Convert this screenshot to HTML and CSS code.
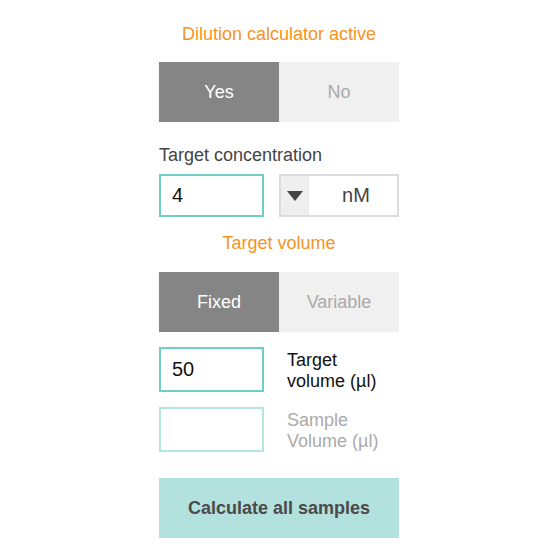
FILE: index.html
```html
<!DOCTYPE html>
<html lang="en">

<head>
    <meta charset="UTF-8">
    <meta name="viewport" content="width=device-width, initial-scale=1.0">
    <title>Dilution calculator</title>
    <link rel="stylesheet" href="styles.css">
</head>

<body>
    <div class="panel">
        <div class="heading heading--first">Dilution calculator active</div>
        <div class="toggle toggle--first">
            <div class="toggle__item toggle__item--on">Yes</div>
            <div class="toggle__item">No</div>
        </div>

        <div class="field-label">Target concentration</div>
        <div class="row row--conc">
            <input class="num-input" type="text" value="4">
            <div class="unit-select">
                <span class="unit-select__arrow">
                    <svg width="16" height="10" viewBox="0 0 16 10"><path d="M0 0 L16 0 L8 10 Z" fill="#454545"/></svg>
                </span>
                <span class="unit-select__value">nM</span>
            </div>
        </div>

        <div class="heading heading--second">Target volume</div>
        <div class="toggle toggle--second">
            <div class="toggle__item toggle__item--on">Fixed</div>
            <div class="toggle__item">Variable</div>
        </div>

        <div class="row row--vol">
            <input class="num-input" type="text" value="50">
            <div class="row__label">Target<br>volume (µl)</div>
        </div>
        <div class="row row--sample">
            <input class="num-input num-input--off" type="text" value="" disabled>
            <div class="row__label row__label--off">Sample<br>Volume (µl)</div>
        </div>

        <button class="calc-button">Calculate all samples</button>
    </div>
</body>

</html>
```

FILE: styles.css
```css
* {
    box-sizing: border-box;
}

body {
    margin: 0;
    font-family: "Liberation Sans", Arial, sans-serif;
    background: #fff;
}

.panel {
    width: 240px;
    margin: 0 auto 0 159px;
    padding-top: 24px;
}

.heading {
    color: #f7931e;
    font-size: 18px;
    line-height: 20px;
    text-align: center;
}

.heading--second {
    margin-top: 16px;
}

.toggle {
    display: flex;
    height: 60px;
    margin-top: 18px;
}

.toggle--second {
    margin-top: 19px;
}

.toggle__item {
    flex: 1;
    display: flex;
    align-items: center;
    justify-content: center;
    background: #f0f0f0;
    color: #aaaaaa;
    font-size: 18px;
}

.toggle__item--on {
    background: #858585;
    color: #fff;
}

.field-label {
    margin-top: 23px;
    font-size: 18px;
    line-height: 20px;
    color: #444;
}

.row {
    display: grid;
    grid-template-columns: 105px 1fr;
    column-gap: 15px;
    height: 43px;
    margin-top: 9px;
}

.row--vol {
    height: 44px;
    margin-top: 15px;
    column-gap: 23px;
}

.row--sample {
    height: 44px;
    margin-top: 16px;
    column-gap: 23px;
}

.num-input {
    width: 105px;
    height: 100%;
    border: 2px solid #6fcec6;
    padding: 0 0 0 11px;
    font-family: inherit;
    font-size: 20px;
    color: #111;
    background: #fff;
    outline: none;
}

.num-input--off {
    border-color: #b5e5e1;
}

.unit-select {
    display: flex;
    border: 2px solid #dcdcdc;
    height: 100%;
}

.unit-select__arrow {
    width: 28px;
    background: #eeeeee;
    display: flex;
    align-items: center;
    justify-content: center;
}

.unit-select__value {
    flex: 1;
    display: flex;
    align-items: center;
    justify-content: center;
    padding-left: 6px;
    font-size: 20px;
    color: #444;
}

.row__label {
    display: flex;
    align-items: center;
    padding-top: 3px;
    font-size: 18px;
    line-height: 21px;
    color: #111;
}

.row__label--off {
    color: #aaaaaa;
}

.calc-button {
    display: block;
    width: 240px;
    height: 60px;
    margin-top: 27px;
    border: none;
    background: #b3e1de;
    color: #4a4a4a;
    font-family: inherit;
    font-size: 18px;
    font-weight: bold;
}
```
